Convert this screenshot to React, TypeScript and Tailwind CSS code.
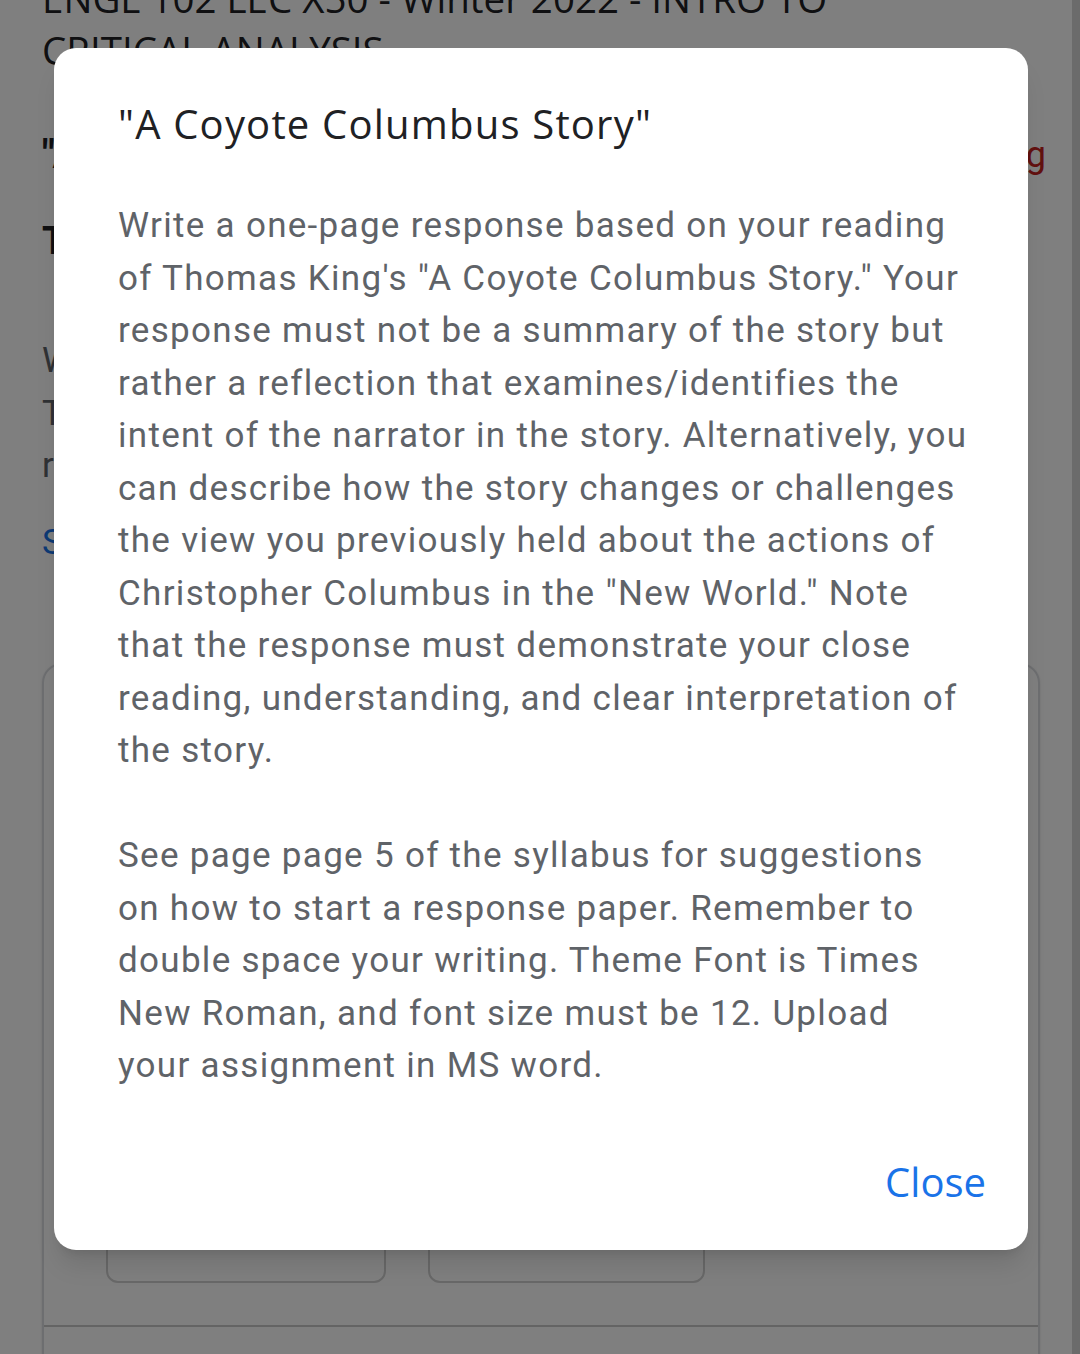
import React from 'react'

const para1 = [
  'Write a one-page response based on your reading',
  'of Thomas King\'s "A Coyote Columbus Story." Your',
  'response must not be a summary of the story but',
  'rather a reflection that examines/identifies the',
  'intent of the narrator in the story. Alternatively, you',
  'can describe how the story changes or challenges',
  'the view you previously held about the actions of',
  'Christopher Columbus in the "New World." Note',
  'that the response must demonstrate your close',
  'reading, understanding, and clear interpretation of',
  'the story.',
]

const para2 = [
  'See page page 5 of the syllabus for suggestions',
  'on how to start a response paper. Remember to',
  'double space your writing. Theme Font is Times',
  'New Roman, and font size must be 12. Upload',
  'your assignment in MS word.',
]

function Lines({ lines }: { lines: string[] }) {
  return (
    <p>
      {lines.map((l, i) => (
        <span key={i} className="block whitespace-nowrap">
          {l}
        </span>
      ))}
    </p>
  )
}

export default function App() {
  return (
    <div className="relative h-[1354px] w-[1080px] overflow-hidden bg-white font-['Roboto',sans-serif]">
      {/* page underneath the dialog */}
      <div className="flex h-full">
        <div className="flex-1 pl-[42px] pr-[32px]">
          <h1 className="mt-[-28px] font-['Open_Sans',sans-serif] text-[38.5px] leading-[52px] text-[#202124]">
            ENGL 102 LEC X50 - Winter 2022 - INTRO TO
            <br />
            CRITICAL ANALYSIS
          </h1>
          <div className="mt-[52px] flex items-center justify-between">
            <h2 className="text-[40px] font-bold leading-[52px] text-[#202124]">"A Coyote Story"</h2>
            <span className="mr-[-6px] text-[36px] text-[#c5221f]">Missing</span>
          </div>
          <h3 className="mt-[33px] text-[38px] font-bold leading-[52px] text-[#202124]">Task</h3>
          <p className="mt-[68px] text-[35px] leading-[52.5px] text-[#5f6368]">
            Write
            <br />
            Thomas
            <br />
            response
          </p>
          <div className="mt-[24px] text-[35px] leading-[52px] text-[#1a73e8]">See</div>
          <div className="mt-[94px] h-[720px] rounded-[20px] border-2 border-[#dadce0] shadow">
            <div className="flex gap-[42px] pl-[62px] pt-[463px]">
              <div className="h-[155px] w-[280px] rounded-[12px] border-2 border-[#d0d0d0]" />
              <div className="h-[155px] w-[277px] rounded-[12px] border-2 border-[#d0d0d0]" />
            </div>
            <div className="mt-[42px] border-t-2 border-[#c8c8c8]" />
          </div>
        </div>
        <div className="w-[8px] bg-[#d6d6d6]" />
      </div>

      {/* scrim */}
      <div className="absolute inset-0 bg-black/50" />

      {/* dialog */}
      <div className="absolute left-[54px] top-[48px] flex h-[1202px] w-[974px] flex-col rounded-[22px] bg-white pl-[64px] pr-[42px] pt-[50px] shadow-xl">
        <h2 className="font-['Open_Sans',sans-serif] text-[40px] leading-[52px] tracking-[1.2px] text-[#202124]">
          "A Coyote Columbus Story"
        </h2>
        <div className="mt-[50px] text-[35px] leading-[52.5px] tracking-[1.3px] text-[#5f6368]">
          <Lines lines={para1} />
          <div className="mt-[52.5px]">
            <Lines lines={para2} />
          </div>
        </div>
        <div className="mt-auto flex justify-end pb-[42px]">
          <button className="font-['Open_Sans',sans-serif] text-[40px] font-medium leading-[52px] text-[#1a73e8]">
            Close
          </button>
        </div>
      </div>
    </div>
  )
}
